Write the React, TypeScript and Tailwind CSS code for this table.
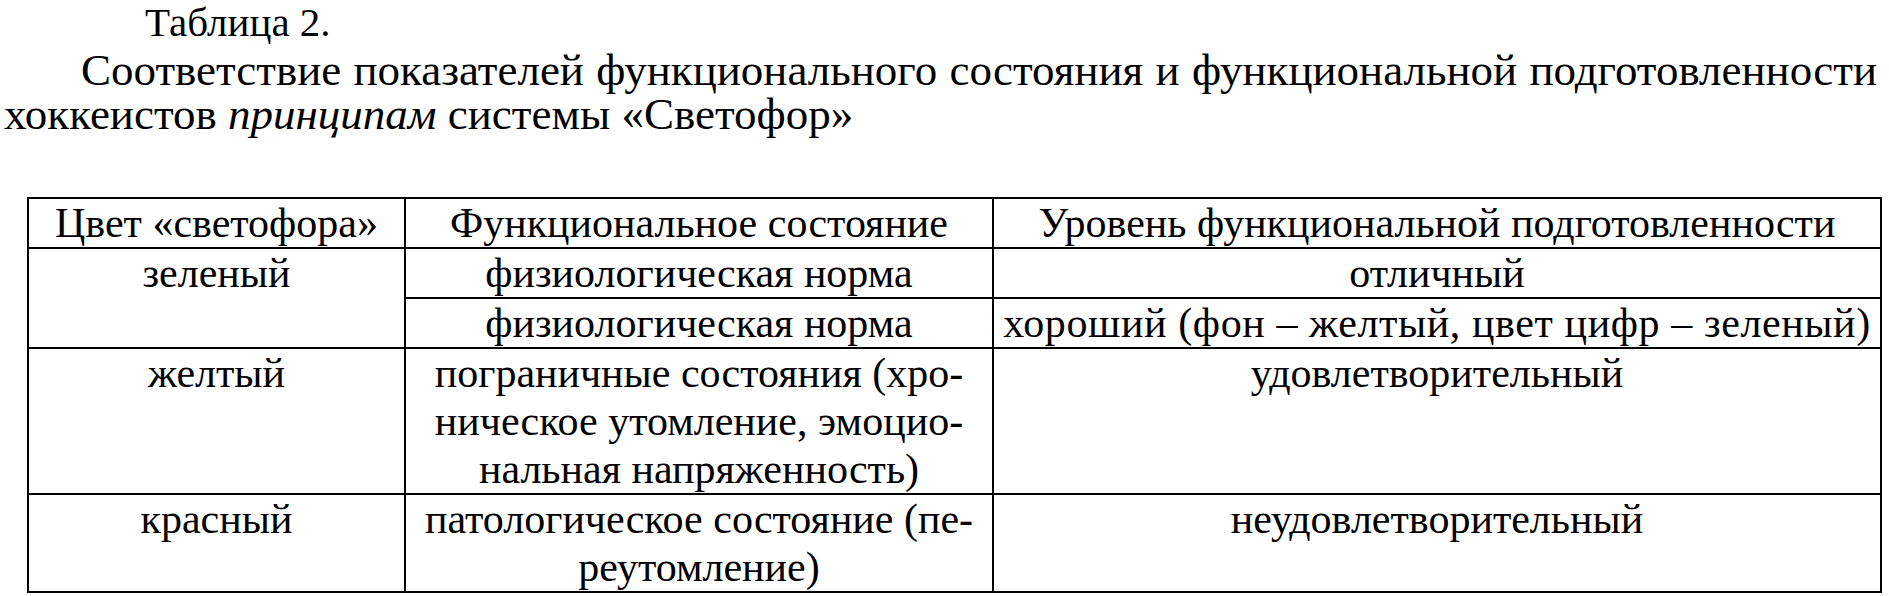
import React from "react";

const cell = "border-2 border-black p-0 align-top text-center whitespace-nowrap";

export default function App() {
  return (
    <div className="w-[1889px] h-[596px] bg-white text-black overflow-hidden">
      <div className="[font-family:'Liberation_Serif'] text-[42px]">
        <div className="pl-[145px] leading-[44px] text-[41px]">Таблица 2.</div>
        <div className="mt-[4px] pl-[4px] pr-[12px] leading-[44px] text-[45px]">
          <div className="pl-[77px] text-justify [text-align-last:justify] whitespace-nowrap">
            Соответствие показателей функционального состояния и функциональной подготовленности
          </div>
          <div>
            хоккеистов <i>принципам</i> системы «Светофор»
          </div>
        </div>
        <table className="ml-[27px] mt-[61px] w-[1853px] table-fixed border-collapse leading-[48px]">
          <colgroup>
            <col className="w-[377px]" />
            <col className="w-[588px]" />
            <col className="w-[888px]" />
          </colgroup>
          <tbody>
            <tr>
              <td className={cell}>Цвет «светофора»</td>
              <td className={cell}>Функциональное состояние</td>
              <td className={cell}>Уровень функциональной подготовленности</td>
            </tr>
            <tr>
              <td className={cell} rowSpan={2}>зеленый</td>
              <td className={cell}>физиологическая норма</td>
              <td className={cell}>отличный</td>
            </tr>
            <tr>
              <td className={cell}>физиологическая норма</td>
              <td className={`${cell} tracking-[0.6px]`}>хороший (фон – желтый, цвет цифр – зеленый)</td>
            </tr>
            <tr>
              <td className={cell}>желтый</td>
              <td className={cell}>
                пограничные состояния (хро-
                <br />
                ническое утомление, эмоцио-
                <br />
                нальная напряженность)
              </td>
              <td className={cell}>удовлетворительный</td>
            </tr>
            <tr>
              <td className={cell}>красный</td>
              <td className={cell}>
                патологическое состояние (пе-
                <br />
                реутомление)
              </td>
              <td className={cell}>неудовлетворительный</td>
            </tr>
          </tbody>
        </table>
      </div>
    </div>
  );
}
